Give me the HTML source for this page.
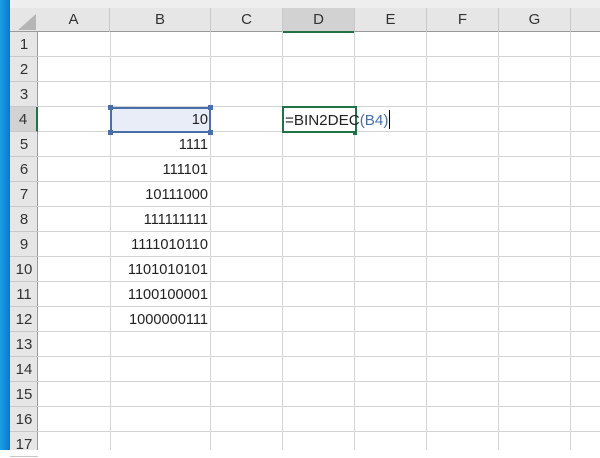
<!DOCTYPE html><html><head><style>
body{margin:0;width:600px;height:450px;overflow:hidden;background:#fff;font-family:"Liberation Sans",sans-serif;position:relative}
.a{position:absolute}
.strip{left:0;top:0;width:10px;height:450px;background:linear-gradient(90deg,#1aa0e8,#0a78cc)}
.top{left:10px;top:0;width:590px;height:8px;background:#eeeeee}
.hdr{left:10px;top:8px;width:590px;height:24px;background:#e6e6e6;border-bottom:1px solid #9a9a9a;box-sizing:border-box}
.rh{left:10px;top:32px;width:28px;height:418px;background:#e6e6e6;border-right:1px solid #9a9a9a;box-sizing:border-box}
.ch{top:8px;height:24px;line-height:24px;text-align:center;font-size:15px;color:#333;border-right:1px solid #c8c8c8;box-sizing:border-box}
.rn{left:10px;width:28px;height:25px;line-height:26px;text-align:center;font-size:15px;color:#333;border-bottom:1px solid #c8c8c8;box-sizing:border-box}
.vl{top:32px;width:1px;height:418px;background:#d4d4d4}
.hl{left:38px;width:562px;height:1px;background:#d4d4d4}
.v{left:100px;width:108px;text-align:right;font-size:14.6px;color:#222;height:25px;line-height:27px}
</style></head><body>
<div class="a strip"></div><div class="a top"></div><div class="a hdr"></div><div class="a rh"></div>
<div class="a" style="left:18px;top:14px;width:0;height:0;border-left:18px solid transparent;border-bottom:16px solid #b5b5b5"></div>
<div class="a ch" style="left:38px;width:72px">A</div>
<div class="a ch" style="left:110px;width:101px">B</div>
<div class="a ch" style="left:211px;width:72px">C</div>
<div class="a ch" style="left:283px;width:72px;background:#d2d2d2;border-bottom:2px solid #217346;height:25px">D</div>
<div class="a ch" style="left:355px;width:72px">E</div>
<div class="a ch" style="left:427px;width:72px">F</div>
<div class="a ch" style="left:499px;width:72px">G</div>
<div class="a vl" style="left:110px"></div><div class="a vl" style="left:210px"></div><div class="a vl" style="left:282px"></div><div class="a vl" style="left:354px"></div><div class="a vl" style="left:426px"></div><div class="a vl" style="left:498px"></div><div class="a vl" style="left:570px"></div>
<div class="a hl" style="top:56px"></div><div class="a hl" style="top:81px"></div><div class="a hl" style="top:106px"></div><div class="a hl" style="top:131px"></div><div class="a hl" style="top:156px"></div><div class="a hl" style="top:181px"></div><div class="a hl" style="top:206px"></div><div class="a hl" style="top:231px"></div><div class="a hl" style="top:256px"></div><div class="a hl" style="top:281px"></div><div class="a hl" style="top:306px"></div><div class="a hl" style="top:331px"></div><div class="a hl" style="top:356px"></div><div class="a hl" style="top:381px"></div><div class="a hl" style="top:406px"></div><div class="a hl" style="top:431px"></div>
<div class="a rn" style="top:32px">1</div><div class="a rn" style="top:57px">2</div><div class="a rn" style="top:82px">3</div><div class="a rn" style="top:107px;background:#d2d2d2;border-right:2px solid #217346">4</div><div class="a rn" style="top:132px">5</div><div class="a rn" style="top:157px">6</div><div class="a rn" style="top:182px">7</div><div class="a rn" style="top:207px">8</div><div class="a rn" style="top:232px">9</div><div class="a rn" style="top:257px">10</div><div class="a rn" style="top:282px">11</div><div class="a rn" style="top:307px">12</div><div class="a rn" style="top:332px">13</div><div class="a rn" style="top:357px">14</div><div class="a rn" style="top:382px">15</div><div class="a rn" style="top:407px">16</div><div class="a rn" style="top:432px">17</div>
<div class="a" style="left:110px;top:107px;width:101px;height:26px;background:#e8edf7;border:2px solid #4a6fa8;box-sizing:border-box"></div>
<div class="a" style="left:108px;top:105px;width:5px;height:5px;background:#4a6fa8"></div><div class="a" style="left:208px;top:105px;width:5px;height:5px;background:#4a6fa8"></div><div class="a" style="left:108px;top:130px;width:5px;height:5px;background:#4a6fa8"></div><div class="a" style="left:208px;top:130px;width:5px;height:5px;background:#4a6fa8"></div>
<div class="a v" style="top:107px">10</div><div class="a v" style="top:132px">1111</div><div class="a v" style="top:157px">111101</div><div class="a v" style="top:182px">10111000</div><div class="a v" style="top:207px">111111111</div><div class="a v" style="top:232px">1111010110</div><div class="a v" style="top:257px">1101010101</div><div class="a v" style="top:282px">1100100001</div><div class="a v" style="top:307px">1000000111</div>
<div class="a" style="left:282px;top:106px;width:75px;height:27px;border:2px solid #217346;box-sizing:border-box;background:#fff"></div>
<div class="a" style="left:353px;top:131px;width:4px;height:4px;background:#217346"></div>
<div class="a" style="left:285px;top:107px;height:25px;line-height:27px;font-size:15.2px;color:#222;white-space:nowrap">=BIN2DEC<span style="color:#4a6fa8">(B4)</span></div>
<div class="a" style="left:389px;top:110px;width:1px;height:19px;background:#000"></div>
</body></html>
